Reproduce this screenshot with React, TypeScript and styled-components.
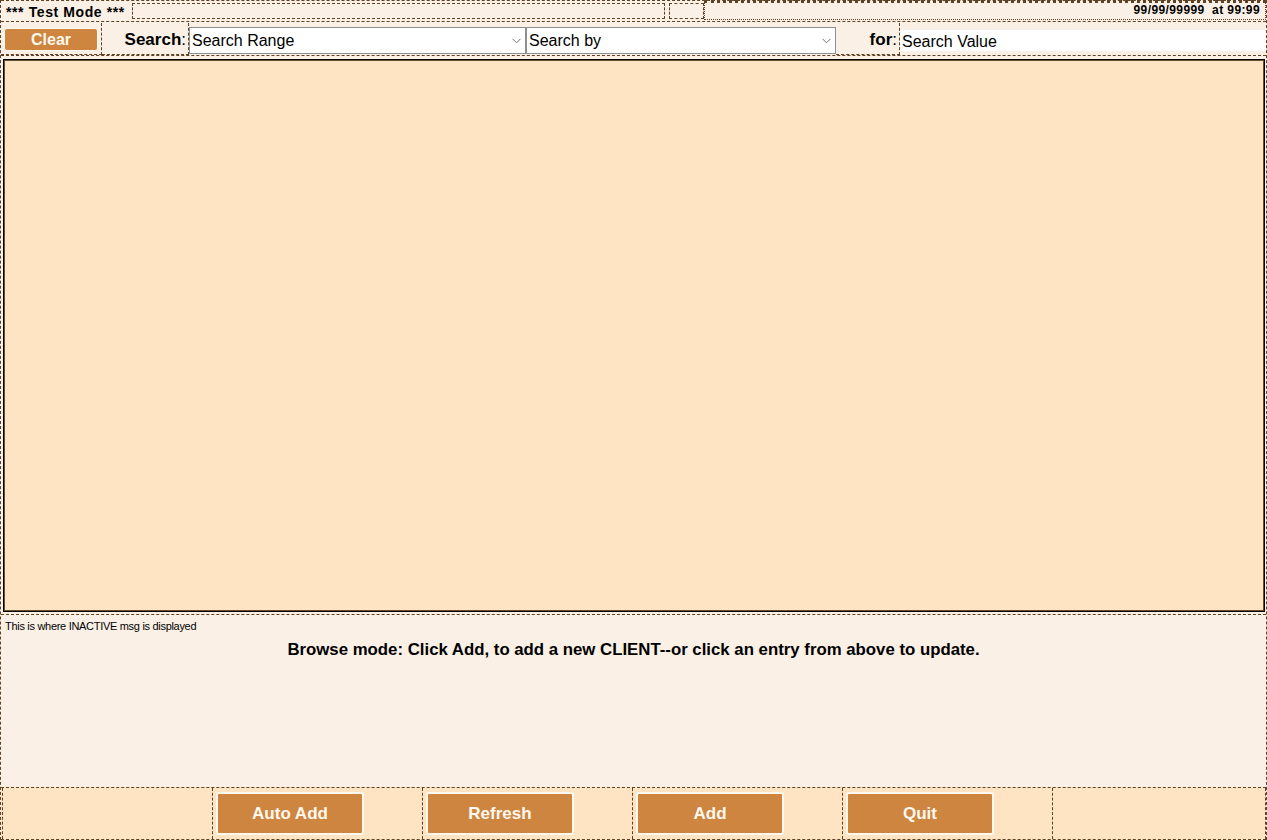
import React from 'react';
import styled, { createGlobalStyle } from 'styled-components';

const GlobalStyle = createGlobalStyle`
  html, body {
    margin: 0;
    padding: 0;
    background: #fbf0e6;
  }
  body {
    font-family: 'Liberation Sans', Arial, sans-serif;
    color: #000;
  }
`;

const dash = '1px dashed #5e4226';

const Page = styled.div`
  width: 1267px;
  height: 840px;
  box-sizing: border-box;
  display: flex;
  flex-direction: column;
  border-left: ${dash};
  border-right: ${dash};
  overflow: hidden;
`;

const HeaderRow = styled.div`
  height: 22px;
  display: flex;
  align-items: stretch;
  border-top: ${dash};
  border-bottom: ${dash};
  box-sizing: border-box;
`;

const ModeLabel = styled.div`
  width: 131px;
  padding-left: 5px;
  box-sizing: border-box;
  font-size: 14px;
  font-weight: bold;
  letter-spacing: 0.6px;
  line-height: 22px;
  white-space: nowrap;
`;

const HeaderBox = styled.div<{ $w: number; $gap?: number; $dotted?: boolean }>`
  width: ${(p) => p.$w}px;
  flex: ${(p) => (p.$dotted ? 1 : 'none')};
  margin: ${(p) => (p.$dotted ? '-1px 0 1px' : `2px ${p.$gap ?? 0}px 2px 0`)};
  box-sizing: border-box;
  border: ${(p) => (p.$dotted ? '1px dotted #5e4226' : dash)};
  border-top: ${(p) => (p.$dotted ? '3px dotted #5e4226' : dash)};
  font-size: 12px;
  font-weight: bold;
  letter-spacing: 0.4px;
  text-align: right;
  padding-right: 5px;
  line-height: 14px;
`;

const SearchRow = styled.div`
  height: 33px;
  display: flex;
  align-items: stretch;
  border-bottom: ${dash};
  box-sizing: border-box;
  margin-top: 1px;
`;

const Cell = styled.div<{ $w?: number; $align?: string }>`
  width: ${(p) => (p.$w ? `${p.$w}px` : 'auto')};
  flex: ${(p) => (p.$w ? 'none' : 1)};
  display: flex;
  align-items: center;
  justify-content: ${(p) => p.$align || 'flex-start'};
  box-sizing: border-box;
  border-right: ${dash};
  border-bottom: ${dash};
  padding: 0 2px 0 3px;
`;

const ClearButton = styled.button`
  width: 94px;
  height: 23px;
  background: #cd853f;
  border: 1px solid #fffaf2;
  border-radius: 3px;
  color: #fff8ee;
  font-family: 'Liberation Sans', Arial, sans-serif;
  font-size: 16px;
  font-weight: bold;
  padding: 0;
  margin-top: 2px;
`;

const Label = styled.span`
  font-size: 17px;
  font-weight: bold;
  white-space: nowrap;
  margin-top: 2px;
  & > i {
    font-style: normal;
    font-weight: normal;
  }
`;

const Select = styled.div<{ $w: number }>`
  width: ${(p) => p.$w}px;
  height: 27px;
  margin-top: 4px;
  box-sizing: border-box;
  background: #fff;
  border: 1px solid #8f8f8f;
  display: flex;
  align-items: center;
  justify-content: space-between;
  padding: 0 4px 0 2px;
  font-size: 16px;
`;

const ValueInput = styled.div`
  flex: 1;
  height: 21px;
  margin-top: 7px;
  background: #fff;
  font-size: 16px;
  line-height: 23px;
  padding-left: 2px;
`;

const MainSection = styled.div`
  flex: 1;
  padding: 3px 1px 2px 2px;
  border-bottom: ${dash};
  display: flex;
`;

const ListBox = styled.div`
  flex: 1;
  background: #ffe4c4;
  border: 1px solid #000;
  box-shadow: inset 0 0 0 1px #6a4e30;
`;

const MessageArea = styled.div`
  height: 172px;
  box-sizing: border-box;
  padding: 5px 4px 0;
  background: #fbf0e6;
`;

const InactiveMsg = styled.div`
  font-size: 11px;
  letter-spacing: -0.3px;
  line-height: 12px;
`;

const BrowseMsg = styled.div`
  margin-top: 8px;
  text-align: center;
  font-size: 16.8px;
  font-weight: bold;
  line-height: 20px;
`;

const Footer = styled.div`
  height: 53px;
  box-sizing: border-box;
  display: flex;
  background: #ffe4c4;
  border-top: ${dash};
  border-bottom: ${dash};
  padding: 0 0 0 1px;
`;

const FootCell = styled.div<{ $last?: boolean }>`
  width: ${(p) => (p.$last ? 'auto' : '210px')};
  flex: ${(p) => (p.$last ? 1 : 'none')};
  box-sizing: border-box;
  border-left: ${dash};
  border-right: ${(p) => (p.$last ? dash : 'none')};
  padding: 4px 0 0 3px;
`;

const ActionButton = styled.button`
  width: 148px;
  height: 43px;
  background: #cd853f;
  border: 2px solid #fff8ee;
  border-radius: 3px;
  color: #fff8ee;
  font-family: 'Liberation Sans', Arial, sans-serif;
  font-size: 17px;
  font-weight: bold;
  padding: 0;
`;

const Chevron = () => (
  <svg width="9" height="6" viewBox="0 0 9 6">
    <path d="M0.5 0.8 L4.5 4.8 L8.5 0.8" fill="none" stroke="#707070" strokeWidth="1" />
  </svg>
);

const App: React.FC = () => {
  const actions = ['Auto Add', 'Refresh', 'Add', 'Quit'];
  return (
    <>
      <GlobalStyle />
      <Page>
        <HeaderRow>
          <ModeLabel>*** Test Mode ***</ModeLabel>
          <HeaderBox $w={533} $gap={4} />
          <HeaderBox $w={35} />
          <HeaderBox $w={0} $dotted>
            99/99/99999&nbsp; at 99:99
          </HeaderBox>
        </HeaderRow>
        <SearchRow>
          <Cell $w={101}>
            <ClearButton>Clear</ClearButton>
          </Cell>
          <Cell $w={87} $align="flex-end">
            <Label>
              Search<i>:</i>
            </Label>
          </Cell>
          <Select $w={337}>
            Search Range
            <Chevron />
          </Select>
          <Select $w={310}>
            Search by
            <Chevron />
          </Select>
          <Cell $w={64} $align="flex-end">
            <Label>
              for<i>:</i>
            </Label>
          </Cell>
          <ValueInput>Search Value</ValueInput>
        </SearchRow>
        <MainSection>
          <ListBox />
        </MainSection>
        <MessageArea>
          <InactiveMsg>This is where INACTIVE msg is displayed</InactiveMsg>
          <BrowseMsg>
            Browse mode: Click Add, to add a new CLIENT--or click an entry from above to update.
          </BrowseMsg>
        </MessageArea>
        <Footer>
          <FootCell />
          {actions.map((a) => (
            <FootCell key={a}>
              <ActionButton>{a}</ActionButton>
            </FootCell>
          ))}
          <FootCell $last />
        </Footer>
      </Page>
    </>
  );
};

export default App;
